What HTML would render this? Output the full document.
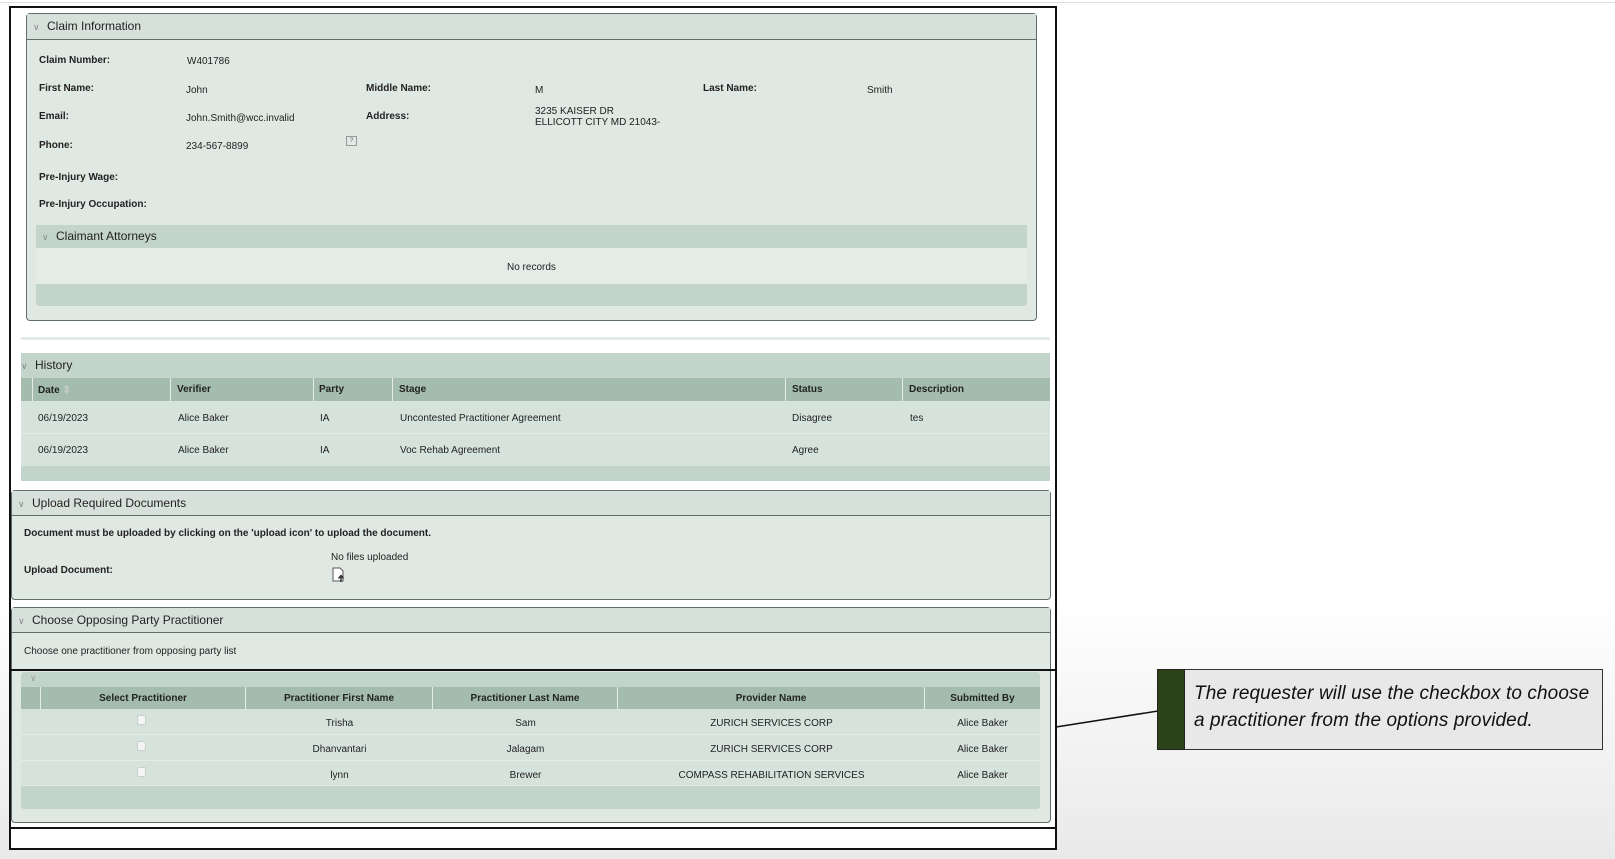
<!DOCTYPE html>
<html><head><meta charset="utf-8"><style>
*{margin:0;padding:0;box-sizing:border-box}
body{width:1615px;height:859px;position:relative;overflow:hidden;font-family:"Liberation Sans",Arial,sans-serif;font-size:10px;color:#222;background:linear-gradient(#fff 0,#fff 600px,#e9e9e9 859px)}
.a{position:absolute}
.b{font-weight:bold}
.panel{position:absolute;background:#dfe8e2;border:1px solid #5f6e66;border-radius:4px}
.hd{position:absolute;left:0;right:0;top:0;background:#d6e1db;border-bottom:1px solid #5f6e66;font-size:12px;color:#222}
.chev{display:inline-block;width:10px;color:#888;font-size:9px;margin:0 4px 0 6px}
.th{position:absolute;background:#a3bcae;font-weight:bold;border-right:1px solid #e4ece7}
.row{position:absolute;background:#d6e3dc;border-bottom:1px solid #e4ece7}
.cb{position:absolute;width:9px;height:10px;background:#f4f4f4;border:1px solid #c8d0cb;border-radius:2px}
</style></head><body>
<div class="a" style="left:0;top:2px;width:1615px;height:1px;background:#ddd"></div>
<div class="a" style="left:9px;top:6px;width:1048px;height:844px;border:2px solid #111;background:#fff"></div>

<div class="panel" style="left:26px;top:13px;width:1011px;height:308px">
 <div class="hd" style="height:26px;line-height:24px"><span class="chev">∨</span>Claim Information</div>
</div>
<div class="a b" style="left:39px;top:55px">Claim Number:</div><div class="a" style="left:187px;top:56px">W401786</div>
<div class="a b" style="left:39px;top:83px">First Name:</div><div class="a" style="left:186px;top:85px">John</div>
<div class="a b" style="left:366px;top:83px">Middle Name:</div><div class="a" style="left:535px;top:85px">M</div>
<div class="a b" style="left:703px;top:83px">Last Name:</div><div class="a" style="left:867px;top:85px">Smith</div>
<div class="a b" style="left:39px;top:111px">Email:</div><div class="a" style="left:186px;top:113px">John.Smith@wcc.invalid</div>
<div class="a" style="left:535px;top:106px;line-height:11px">3235 KAISER DR<br>ELLICOTT CITY MD 21043-</div>
<div class="a b" style="left:366px;top:111px">Address:</div>
<div class="a b" style="left:39px;top:140px">Phone:</div><div class="a" style="left:186px;top:141px">234-567-8899</div>
<div class="a" style="left:346px;top:136px;width:11px;height:10px;border:1px solid #999;font-size:6px;text-align:center;line-height:8px;color:#666">?</div>
<div class="a b" style="left:39px;top:172px">Pre-Injury Wage:</div>
<div class="a b" style="left:39px;top:199px">Pre-Injury Occupation:</div>
<div class="a" style="left:36px;top:225px;width:991px;height:82px;background:#e4ece7;border-radius:3px"></div>
<div class="a" style="left:36px;top:225px;width:991px;height:23px;background:#c3d4ca;font-size:12px;line-height:23px"><span class="chev">∨</span>Claimant Attorneys</div>
<div class="a" style="left:507px;top:262px">No records</div>
<div class="a" style="left:36px;top:284px;width:991px;height:22px;background:#c3d4ca;border-radius:0 0 3px 3px"></div>

<div class="a" style="left:21px;top:337px;width:1029px;height:3px;background:#e4ece7"></div>

<div class="a" style="left:21px;top:353px;width:1029px;height:128px;background:#d6e3dc"></div>
<div class="a" style="left:21px;top:353px;width:1029px;height:25px;background:#c3d4ca;font-size:12px;line-height:25px"><span class="chev" style="margin-left:0">∨</span>History</div>
<div class="th" style="left:21px;top:378px;width:12px;height:23px"></div>
<div class="th" style="left:33px;top:378px;width:138px;height:23px;line-height:25px;padding-left:5px">Date <span style="color:#ccc">⇕</span></div>
<div class="th" style="left:171px;top:378px;width:143px;height:23px;line-height:24px;padding-left:6px">Verifier</div>
<div class="th" style="left:314px;top:378px;width:79px;height:23px;line-height:24px;padding-left:5px">Party</div>
<div class="th" style="left:393px;top:378px;width:393px;height:23px;line-height:24px;padding-left:6px">Stage</div>
<div class="th" style="left:786px;top:378px;width:117px;height:23px;line-height:24px;padding-left:6px">Status</div>
<div class="th" style="left:903px;top:378px;width:147px;height:23px;line-height:24px;padding-left:6px;border:0">Description</div>
<div class="row" style="left:21px;top:401px;width:1029px;height:33px"></div>
<div class="a" style="left:38px;top:413px">06/19/2023</div><div class="a" style="left:178px;top:413px">Alice Baker</div><div class="a" style="left:320px;top:413px">IA</div><div class="a" style="left:400px;top:413px">Uncontested Practitioner Agreement</div><div class="a" style="left:792px;top:413px">Disagree</div><div class="a" style="left:910px;top:413px">tes</div>
<div class="a" style="left:38px;top:445px">06/19/2023</div><div class="a" style="left:178px;top:445px">Alice Baker</div><div class="a" style="left:320px;top:445px">IA</div><div class="a" style="left:400px;top:445px">Voc Rehab Agreement</div><div class="a" style="left:792px;top:445px">Agree</div>
<div class="a" style="left:21px;top:466px;width:1029px;height:15px;background:#c3d4ca"></div>

<div class="panel" style="left:11px;top:490px;width:1040px;height:110px">
 <div class="hd" style="height:25px;line-height:24px"><span class="chev">∨</span>Upload Required Documents</div>
</div>
<div class="a b" style="left:24px;top:528px">Document must be uploaded by clicking on the 'upload icon' to upload the document.</div>
<div class="a b" style="left:24px;top:565px">Upload Document:</div>
<div class="a" style="left:331px;top:552px">No files uploaded</div>
<svg class="a" style="left:331px;top:567px" width="16" height="16" viewBox="0 0 16 16"><path d="M2 1h7l3 3v10H2z" fill="#fff" stroke="#555"/><path d="M10 15V9M7.5 11.5L10 8.5l2.5 3" fill="none" stroke="#333" stroke-width="1.5"/></svg>

<div class="panel" style="left:11px;top:607px;width:1040px;height:216px">
 <div class="hd" style="height:25px;line-height:24px"><span class="chev">∨</span>Choose Opposing Party Practitioner</div>
</div>
<div class="a" style="left:24px;top:646px">Choose one practitioner from opposing party list</div>
<div class="a" style="left:21px;top:672px;width:1019px;height:137px;background:#c3d4ca;border-radius:3px"></div>
<div class="a" style="left:30px;top:673px;color:#999;font-size:9px">∨</div>
<div class="th" style="left:21px;top:687px;width:20px;height:22px"></div>
<div class="th" style="left:41px;top:687px;width:205px;height:22px;line-height:23px;text-align:center">Select Practitioner</div>
<div class="th" style="left:246px;top:687px;width:187px;height:22px;line-height:23px;text-align:center">Practitioner First Name</div>
<div class="th" style="left:433px;top:687px;width:185px;height:22px;line-height:23px;text-align:center">Practitioner Last Name</div>
<div class="th" style="left:618px;top:687px;width:307px;height:22px;line-height:23px;text-align:center">Provider Name</div>
<div class="th" style="left:925px;top:687px;width:115px;height:22px;line-height:23px;text-align:center;border:0">Submitted By</div>
<div class="row" style="left:21px;top:709px;width:1019px;height:26px"></div>
<div class="row" style="left:21px;top:735px;width:1019px;height:26px"></div>
<div class="row" style="left:21px;top:761px;width:1019px;height:25px"></div>
<div class="cb" style="left:137px;top:715px"></div><div class="cb" style="left:137px;top:741px"></div><div class="cb" style="left:137px;top:767px"></div>
<div class="a" style="left:246px;width:187px;top:718px;text-align:center">Trisha</div><div class="a" style="left:433px;width:185px;top:718px;text-align:center">Sam</div><div class="a" style="left:618px;width:307px;top:718px;text-align:center">ZURICH SERVICES CORP</div><div class="a" style="left:925px;width:115px;top:718px;text-align:center">Alice Baker</div>
<div class="a" style="left:246px;width:187px;top:744px;text-align:center">Dhanvantari</div><div class="a" style="left:433px;width:185px;top:744px;text-align:center">Jalagam</div><div class="a" style="left:618px;width:307px;top:744px;text-align:center">ZURICH SERVICES CORP</div><div class="a" style="left:925px;width:115px;top:744px;text-align:center">Alice Baker</div>
<div class="a" style="left:246px;width:187px;top:770px;text-align:center">lynn</div><div class="a" style="left:433px;width:185px;top:770px;text-align:center">Brewer</div><div class="a" style="left:618px;width:307px;top:770px;text-align:center">COMPASS REHABILITATION SERVICES</div><div class="a" style="left:925px;width:115px;top:770px;text-align:center">Alice Baker</div>

<div class="a" style="left:9px;top:669px;width:1048px;height:160px;border:2px solid #111"></div>

<svg class="a" style="left:1050px;top:700px" width="115" height="40"><line x1="6" y1="27" x2="108" y2="11" stroke="#111" stroke-width="1.5"/></svg>
<div class="a" style="left:1157px;top:669px;width:446px;height:81px;background:#e8e8e8;border:1.5px solid #333"></div>
<div class="a" style="left:1157px;top:669px;width:28px;height:81px;background:#2b4316;border:1.5px solid #222"></div>
<div class="a" style="left:1194px;top:680px;font-style:italic;font-size:19px;line-height:27px;color:#111;letter-spacing:0.1px">The requester will use the checkbox to choose<br>a practitioner from the options provided.</div>
</body></html>
